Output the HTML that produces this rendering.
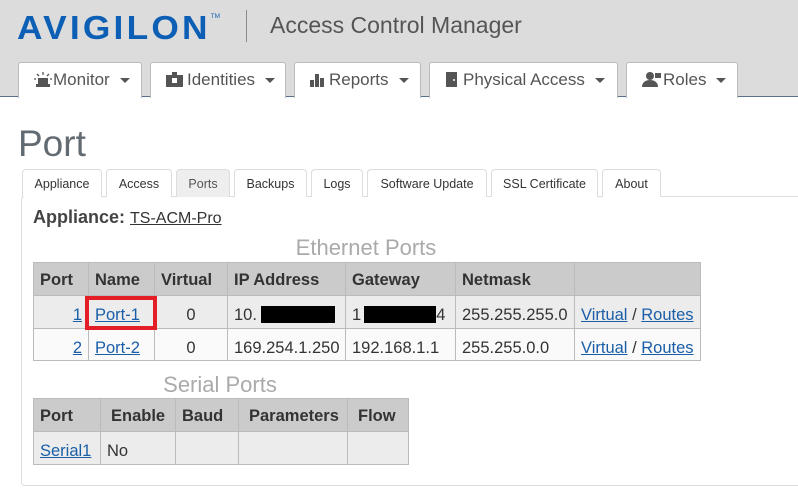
<!DOCTYPE html>
<html><head><meta charset="utf-8"><style>
*{margin:0;padding:0;box-sizing:border-box}
body{width:798px;height:498px;overflow:hidden;background:#fff;font-family:"Liberation Sans",Arial,sans-serif;position:relative}
.a{position:absolute}
#hdr{left:0;top:0;width:798px;height:97px;background:#dcdcdc;border-bottom:1px solid #5a7088}
.logo{left:17px;top:9px;font-size:33px;font-weight:bold;color:#0d5fb5;letter-spacing:3px;transform:scaleX(1.07);transform-origin:left}
.tm{font-size:6px;vertical-align:top;letter-spacing:0;position:relative;top:5px;font-weight:normal}
.nav{top:62px;height:36px;background:#fff;border:1px solid #bbb;border-bottom:none;border-radius:3px 3px 0 0;font-size:17px;color:#555;line-height:33px;padding-left:14px;white-space:nowrap}
.car{display:inline-block;width:0;height:0;border-left:5px solid transparent;border-right:5px solid transparent;border-top:5px solid #555;vertical-align:middle;margin-left:10px}
.st{top:169px;height:28px;border:1px solid #ddd;border-bottom:none;border-radius:4px 4px 0 0;font-size:12.5px;color:#333;text-align:center;line-height:28px;background:#fff}
table{border-collapse:collapse;position:absolute;font-size:16.5px;color:#333;table-layout:fixed;white-space:nowrap}
td,th{border:1px solid #bbb;padding:0 6px;overflow:hidden}
td{padding-top:6px;line-height:20px}
th{background:#cbcbcb;font-weight:bold;text-align:left;height:33px;padding-top:2px}
a{color:#1a5ea8;text-decoration:underline}
.r1 td{background:#ececec}
.r2 td{background:#fafafa}
</style></head><body>
<div id="hdr" class="a"></div>
<div class="a logo">AVIGILON<span class="tm">TM</span></div>
<div class="a" style="left:246px;top:10px;width:1px;height:32px;background:#888"></div>
<div class="a" style="left:270px;top:12px;font-size:23px;color:#555">Access Control Manager</div>

<div class="a nav" style="left:18px;width:124px"><svg width="20" height="16" viewBox="0 0 20 16" style="vertical-align:-2px"><rect x="5" y="7" width="10" height="7" fill="#555"/><rect x="3" y="13" width="14" height="3" fill="#555"/><path d="M10 1v3M4 3l2 2M16 3l-2 2M1 8h2M17 8h2" stroke="#555" stroke-width="1.3"/></svg>Monitor<span class="car"></span></div>
<div class="a nav" style="left:150px;width:136px"><svg width="20" height="16" viewBox="0 0 20 16" style="vertical-align:-2px;margin-right:2px"><rect x="1" y="4" width="17" height="12" fill="#555"/><rect x="7" y="1" width="5" height="4" fill="#555"/><rect x="7" y="7" width="5" height="5" fill="#fff"/></svg>Identities<span class="car"></span></div>
<div class="a nav" style="left:294px;width:127px"><svg width="18" height="16" viewBox="0 0 18 16" style="vertical-align:-2px;margin-right:2px"><rect x="1" y="9" width="4" height="7" fill="#555"/><rect x="6" y="3" width="4" height="13" fill="#555"/><rect x="11" y="7" width="4" height="9" fill="#555"/></svg>Reports<span class="car"></span></div>
<div class="a nav" style="left:429px;width:189px"><svg width="16" height="18" viewBox="0 0 16 18" style="vertical-align:-3px;margin-right:3px"><rect x="2" y="2" width="11" height="15" fill="#555"/><circle cx="10" cy="10" r="1" fill="#fff"/></svg>Physical Access<span class="car"></span></div>
<div class="a nav" style="left:626px;width:112px"><svg width="22" height="18" viewBox="0 0 22 18" style="vertical-align:-3px"><circle cx="9" cy="6" r="4" fill="#555"/><path d="M1 17c0-5 4-7 8-7s8 2 8 7z" fill="#555"/><rect x="14" y="3" width="6" height="5" fill="#555"/></svg>Roles<span class="car"></span></div>

<div class="a" style="left:18px;top:123px;font-size:37px;color:#626a72">Port</div>

<div class="a" style="left:21px;top:196px;width:800px;height:290px;border:1px solid #ddd;border-radius:4px"></div>
<div class="a st" style="left:22px;width:80px">Appliance</div>
<div class="a st" style="left:106px;width:66px">Access</div>
<div class="a st" style="left:176px;width:54px;background:#eee;color:#555">Ports</div>
<div class="a st" style="left:234px;width:73px">Backups</div>
<div class="a st" style="left:311px;width:52px">Logs</div>
<div class="a st" style="left:367px;width:120px">Software Update</div>
<div class="a st" style="left:491px;width:107px">SSL Certificate</div>
<div class="a st" style="left:602px;width:59px">About</div>

<div class="a" style="left:33px;top:207px;font-size:18px;font-weight:bold;color:#444">Appliance: <a style="font-weight:normal;font-size:16px;color:#333">TS-ACM-Pro</a></div>
<div class="a" style="left:33px;width:666px;top:235px;text-align:center;font-size:22px;color:#aaa">Ethernet Ports</div>

<table style="left:33px;top:262px;width:667px">
<colgroup><col style="width:55px"><col style="width:66px"><col style="width:73px"><col style="width:118px"><col style="width:110px"><col style="width:119px"><col style="width:126px"></colgroup>
<tr><th>Port</th><th>Name</th><th>Virtual</th><th>IP Address</th><th>Gateway</th><th>Netmask</th><th></th></tr>
<tr class="r1" style="height:33px"><td style="text-align:right"><a>1</a></td><td><a>Port-1</a></td><td style="text-align:center">0</td><td>10.<span style="display:inline-block;width:74px;height:17px;background:#000;vertical-align:-3px;margin-left:4px"></span></td><td>1<span style="display:inline-block;width:72px;height:17px;background:#000;vertical-align:-3px;margin-left:3px"></span>4</td><td>255.255.255.0</td><td><a>Virtual</a> / <a>Routes</a></td></tr>
<tr class="r2" style="height:32px"><td style="text-align:right"><a>2</a></td><td><a>Port-2</a></td><td style="text-align:center">0</td><td>169.254.1.250</td><td>192.168.1.1</td><td>255.255.0.0</td><td><a>Virtual</a> / <a>Routes</a></td></tr>
</table>
<div class="a" style="left:85px;top:296px;width:72px;height:34px;border:4px solid #e41e26"></div>

<div class="a" style="left:33px;width:374px;top:372px;text-align:center;font-size:22px;color:#aaa">Serial Ports</div>
<table style="left:33px;top:398px;width:375px">
<colgroup><col style="width:67px"><col style="width:75px"><col style="width:63px"><col style="width:109px"><col style="width:61px"></colgroup>
<tr><th>Port</th><th style="padding-left:10px">Enable</th><th>Baud</th><th style="padding-left:10px">Parameters</th><th style="padding-left:10px">Flow</th></tr>
<tr class="r1" style="height:33px"><td><a>Serial1</a></td><td>No</td><td></td><td></td><td></td></tr>
</table>
</body></html>
